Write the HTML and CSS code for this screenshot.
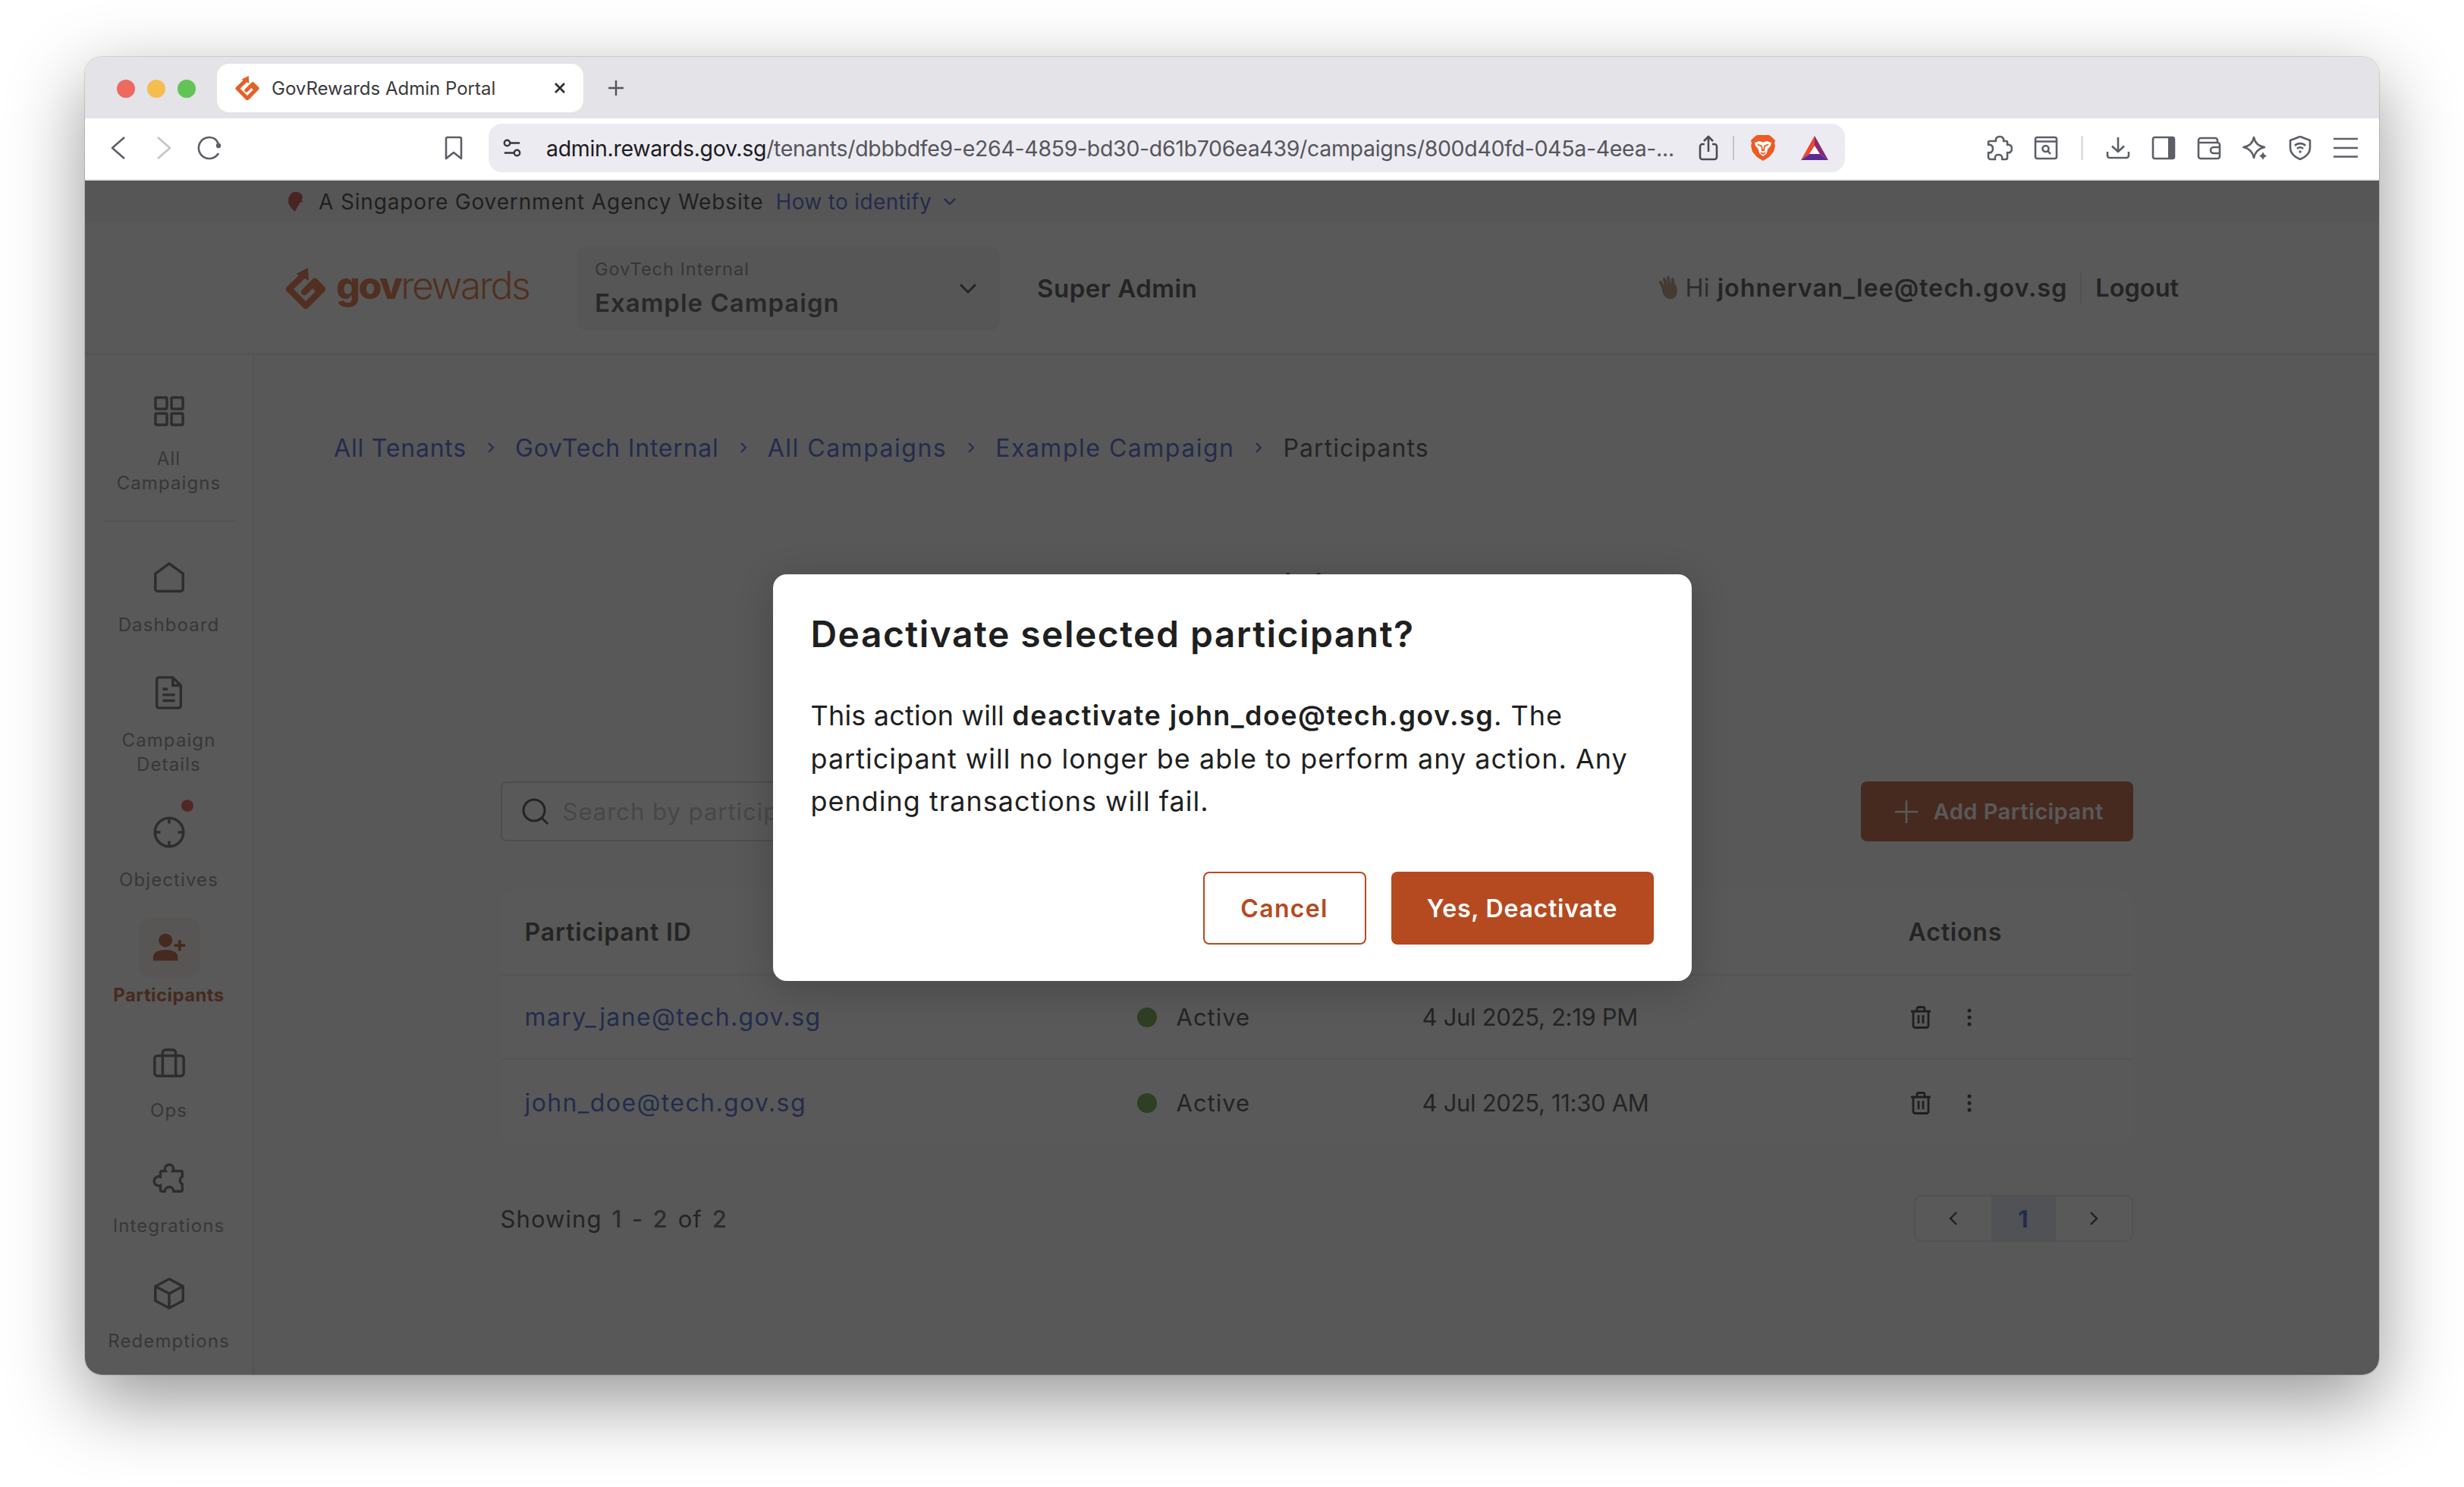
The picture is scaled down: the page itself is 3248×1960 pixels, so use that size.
FILE: index.html
```html
<!DOCTYPE html>
<html>
<head>
	<meta charset="UTF-8">
	<title>GovRewards Admin Portal</title>
	<link rel="stylesheet" href="styles.css">
</head>
<body>
<svg class="defs" width="0" height="0">
	<symbol id="gov" viewBox="0 0 54 54">
		<path d="M24 10 L5 28 L27 50 L49 28 L39 18 L25 32" fill="none" stroke="currentColor" stroke-width="8.500" stroke-linejoin="round" stroke-linecap="round"/>
		<path d="M14 8 L30 0 L31 17 Z M32 23 L44 21 L43 34 Z" fill="currentColor"/>
	</symbol>
	<symbol id="trash" viewBox="0 0 28 30">
		<path d="M1 7 H27 M9 7 V3.500 A2 2 0 0 1 11 1.500 H17 A2 2 0 0 1 19 3.500 V7 M4 7 V26 A2.500 2.500 0 0 0 6.500 28.500 H21.500 A2.500 2.500 0 0 0 24 26 V7 M11 12 V23 M17 12 V23" fill="none" stroke="currentColor" stroke-width="2.800"/>
	</symbol>
	<symbol id="kebab" viewBox="0 0 8 24">
		<circle cx="4" cy="3" r="2.500" fill="currentColor"/><circle cx="4" cy="12" r="2.500" fill="currentColor"/><circle cx="4" cy="21" r="2.500" fill="currentColor"/>
	</symbol>
</svg>

<div class="window">
	<div class="tabbar">
		<div class="lights"><i class="red"></i><i class="amber"></i><i class="green"></i></div>
		<div class="tab">
			<svg class="favicon"><use href="#gov"/></svg>
			<span class="tab-title">GovRewards Admin Portal</span>
			<svg class="tab-close" viewBox="0 0 16 16"><path d="M2 2 L14 14 M14 2 L2 14"/></svg>
		</div>
		<svg class="tab-new" viewBox="0 0 22 22"><path d="M11 1 V21 M1 11 H21"/></svg>
	</div>

	<div class="toolbar">
		<svg class="tool back" viewBox="0 0 32 32"><path d="M24 2 L8 16 L24 30"/></svg>
		<svg class="tool forward" viewBox="0 0 32 32"><path d="M8 2 L24 16 L8 30"/></svg>
		<svg class="tool reload" viewBox="0 0 32 32"><path d="M28 23 A14 14 0 1 1 22 3.400 C25 5 27 8 28 12"/><circle cx="28" cy="13" r="3.200" class="solid"/></svg>
		<svg class="tool bookmark" viewBox="0 0 32 32"><path d="M6 30 V4 A2 2 0 0 1 8 2 H24 A2 2 0 0 1 26 4 V30 L16 22 Z"/></svg>
		<div class="urlbar">
			<svg class="tool tune" viewBox="0 0 28 28"><circle cx="7" cy="7" r="4"/><path d="M11 7 H25 M3 21 H17"/><circle cx="21" cy="21" r="4"/></svg>
			<span class="url"><b>admin.rewards.gov.sg</b>/tenants/dbbbdfe9-e264-4859-bd30-d61b706ea439/campaigns/800d40fd-045a-4eea-...</span>
			<svg class="tool share" viewBox="0 0 26 34"><path d="M13 22 V2 M7 8 L13 2 L19 8 M8 12 H5 A3 3 0 0 0 2 15 V29 A3 3 0 0 0 5 32 H21 A3 3 0 0 0 24 29 V15 A3 3 0 0 0 21 12 H18"/></svg>
			<i class="url-sep"></i>
			<svg class="brave" viewBox="0 0 32 34"><path d="M8 0 H24 L28 3 L32 7 L31 11 L32 14 L30 22 L24 29 L16 34 L8 29 L2 22 L0 14 L1 11 L0 7 L4 3 Z" fill="#ee5a24"/><path d="M5 10 L11 8 L16 9.500 L21 8 L27 10 L26 14 L22 19 L21 24 L16 28 L11 24 L10 19 L6 14 Z" fill="#fff"/><path d="M9 12.500 L14 14.500 L15 20 H17 L18 14.500 L23 12.500 M13 23 L16 25 L19 23" fill="none" stroke="#ee5a24" stroke-width="1.800"/></svg>
			<svg class="triangle" viewBox="0 0 36 32"><path d="M18 13 L11 24 H25 Z" fill="#fff"/><path d="M18 0 L0 32 L11 24 L18 13 Z" fill="#e8482c"/><path d="M18 0 L36 32 L25 24 L18 13 Z" fill="#8a2a6e"/><path d="M0 32 H36 L25 24 H11 Z" fill="#5d2a94"/></svg>
		</div>
		<div class="tools-right">
			<svg class="tool wide" viewBox="0 0 34 34"><path d="M7 8 H12 C11 4 14 2 17 2 C20 2 23 4 22 8 H26 A1 1 0 0 1 27 9 V13 C30 12 33 14 33 18 C33 22 30 24 27 23 V30 A2 2 0 0 1 25 32 H20 C21 27 18 26 15.500 26 C13 26 10 27 11 32 H5 A3 3 0 0 1 2 29 V23 C5 24 8 22 8 18 C8 14 5 12 2 13 V10 A2 2 0 0 1 4 8 Z"/></svg>
			<svg class="tool" viewBox="0 0 32 32"><rect x="2" y="2" width="28" height="28" rx="2.500"/><path d="M2 7.500 H30"/><circle cx="15.500" cy="17" r="4"/><path d="M18.500 20 L22 24"/></svg>
			<i class="tool-sep"></i>
			<svg class="tool" viewBox="0 0 32 32"><path d="M16 2 V21 M8 13.500 L16 21 L24 13.500 M2 21 V26 A3 3 0 0 0 5 29 H27 A3 3 0 0 0 30 26 V21"/></svg>
			<svg class="tool" viewBox="0 0 32 32"><rect x="2" y="2" width="28" height="28" rx="2.500"/><path d="M22 2 H28 A2 2 0 0 1 30 4 V28 A2 2 0 0 1 28 30 H22 Z" class="solid"/></svg>
			<svg class="tool" viewBox="0 0 32 32"><path d="M27 9 V6 A3 3 0 0 0 24 3 H5 A3 3 0 0 0 2 6 V27 A3 3 0 0 0 5 30 H27 A3 3 0 0 0 30 27 V12 A3 3 0 0 0 27 9 H2"/><path d="M30 15 H22 A3 3 0 0 0 22 23 H30"/></svg>
			<svg class="tool" viewBox="0 0 32 32"><path d="M15 2 Q17 13 29 15 Q17 18 15 29 Q13 18 1.500 15 Q13 13 15 2 Z"/><path d="M27 21 Q28 25 32 26.500 Q28 28 27 32 Q26 28 22 26.500 Q26 25 27 21 Z" class="solid"/></svg>
			<svg class="tool" viewBox="0 0 32 32"><path d="M16 1 L29 6 V16 C29 23 23 28 16 31 C9 28 3 23 3 16 V6 Z"/><path d="M9 13 A10 10 0 0 1 23 13 M12 17 A5.500 5.500 0 0 1 20 17"/><circle cx="16" cy="21" r="1.700" class="solid"/></svg>
			<svg class="tool" viewBox="0 0 32 32"><path d="M0 4 H32 M0 16 H32 M0 27.500 H32"/></svg>
		</div>
	</div>

	<div class="page">
		<div class="masthead">
			<svg class="lion" viewBox="0 0 21 26"><path d="M9 0 C14 -1 19 2 20 6 L19 10 L20 13 L16 14 C16 17 12 20 10 26 C6 22 1 18 1 12 C1 6 4 1 9 0 Z"/></svg>
			<span class="gov-line">A Singapore Government Agency Website</span>
			<a class="identify">How to identify</a>
			<svg class="identify-arrow" viewBox="0 0 20 12"><path d="M2 2 L10 10 L18 2"/></svg>
		</div>

		<div class="header">
			<div class="logo">
				<svg class="logo-mark"><use href="#gov"/></svg>
				<span class="logo-text"><b>gov</b>rewards</span>
			</div>
			<div class="picker">
				<div>
					<div class="picker-label">GovTech Internal</div>
					<div class="picker-name">Example Campaign</div>
				</div>
				<svg class="picker-arrow" viewBox="0 0 24 14"><path d="M2 2 L12 12 L22 2"/></svg>
			</div>
			<div class="role">Super Admin</div>
			<div class="user">
				<svg class="wave" viewBox="0 0 28 32"><path d="M6 14 L3 8 M10 10 L8 4 M14 8 L13 2 M19 9 L19 4" stroke="#b08a6c" stroke-width="4" stroke-linecap="round"/><path d="M5 15 C4 24 10 31 18 30 C24 29 26 22 24 14 L21 8 L7 10 Z" fill="#b08a6c"/></svg>
				<span class="hi">Hi</span>
				<b class="user-name">johnervan_lee@tech.gov.sg</b>
				<i class="user-sep"></i>
				<b class="logout">Logout</b>
			</div>
		</div>

		<div class="main">
			<div class="sidebar">
				<div class="nav-item">
					<div class="nav-icon"><svg viewBox="0 0 24 24"><rect x="2.600" y="2.600" width="7.800" height="7.800" rx=".8"/><rect x="13.600" y="2.600" width="7.800" height="7.800" rx=".8"/><rect x="2.600" y="13.600" width="7.800" height="7.800" rx=".8"/><rect x="13.600" y="13.600" width="7.800" height="7.800" rx=".8"/></svg></div>
					<div class="nav-label">All<br>Campaigns</div>
				</div>
				<div class="nav-rule"></div>
				<div class="nav-item">
					<div class="nav-icon"><svg viewBox="0 0 24 24"><path d="M12 2.500 L21.500 9.500 V20 A1.500 1.500 0 0 1 20 21.500 H4 A1.500 1.500 0 0 1 2.500 20 V9.500 Z"/></svg></div>
					<div class="nav-label">Dashboard</div>
				</div>
				<div class="nav-item">
					<div class="nav-icon"><svg viewBox="0 0 24 24"><path d="M5 1.500 H14.500 L20 7 V21 A1.500 1.500 0 0 1 18.500 22.500 H5 A1.500 1.500 0 0 1 3.500 21 V3 A1.500 1.500 0 0 1 5 1.500 Z M14.500 1.500 V7 H20 M7.500 9.500 H11 M7.500 13.500 H16 M7.500 17.500 H16"/></svg></div>
					<div class="nav-label">Campaign<br>Details</div>
				</div>
				<div class="nav-item">
					<div class="nav-icon">
						<svg viewBox="0 0 24 24"><circle cx="12" cy="12" r="9.800"/><path d="M12 2 V6 M12 18 V22 M2 12 H6 M18 12 H22"/></svg>
						<i class="nav-dot"></i>
					</div>
					<div class="nav-label">Objectives</div>
				</div>
				<div class="nav-item active">
					<div class="nav-icon"><svg viewBox="0 0 24 24"><circle cx="9.500" cy="7" r="4.700" class="solid"/><path d="M1 21 V18.500 C1 15 5 13.500 9.500 13.500 C14 13.500 18 15 18 18.500 V21 Z" class="solid"/><path d="M15.500 10.500 H23 M19.200 6.800 V14.200" class="plus"/></svg></div>
					<div class="nav-label">Participants</div>
				</div>
				<div class="nav-item">
					<div class="nav-icon"><svg viewBox="0 0 24 24"><rect x="2" y="7" width="20" height="14" rx="2"/><path d="M7.500 21 V5 A2 2 0 0 1 9.500 3 H14.500 A2 2 0 0 1 16.500 5 V21"/></svg></div>
					<div class="nav-label">Ops</div>
				</div>
				<div class="nav-item">
					<div class="nav-icon"><svg viewBox="0 0 24 24"><path d="M7 7 H9.500 A2.900 2.900 0 1 1 14.500 7 H20 A1 1 0 0 1 21 8 V11 A2.800 2.800 0 0 0 21 16 V20 A1 1 0 0 1 20 21 H15 A3 3 0 0 0 9 21 H7 A1 1 0 0 1 6 20 V17 A3.200 3.200 0 1 1 6 11 V8 A1 1 0 0 1 7 7 Z"/></svg></div>
					<div class="nav-label">Integrations</div>
				</div>
				<div class="nav-item">
					<div class="nav-icon"><svg viewBox="0 0 24 24"><path d="M12 2 L21.500 7 V17 L12 22 L2.500 17 V7 Z M2.500 7 L12 12 L21.500 7 M12 12 V22"/></svg></div>
					<div class="nav-label">Redemptions</div>
				</div>
			</div>

			<div class="content">
				<div class="crumbs">
					<a>All Tenants</a><svg class="crumb-arrow" viewBox="0 0 10 16"><path d="M2 2 L8 8 L2 14"/></svg>
					<a>GovTech Internal</a><svg class="crumb-arrow" viewBox="0 0 10 16"><path d="M2 2 L8 8 L2 14"/></svg>
					<a class="crumb-wide">All Campaigns</a><svg class="crumb-arrow" viewBox="0 0 10 16"><path d="M2 2 L8 8 L2 14"/></svg>
					<a class="crumb-wide">Example Campaign</a><svg class="crumb-arrow" viewBox="0 0 10 16"><path d="M2 2 L8 8 L2 14"/></svg>
					<span>Participants</span>
				</div>

				<div class="panel">
					<h1 class="panel-title">Participants</h1>
					<div class="panel-tools">
						<div class="search">
							<svg class="search-icon" viewBox="0 0 36 36"><circle cx="16" cy="16" r="14"/><path d="M26 26 L34 34"/></svg>
							<span class="placeholder">Search by participant ID</span>
						</div>
						<div class="add-btn">
							<svg class="add-plus" viewBox="0 0 32 32"><path d="M16 1 V31 M1 16 H31"/></svg>
							<span>Add Participant</span>
						</div>
					</div>

					<div class="table">
						<div class="tr th">
							<div>Participant ID</div>
							<div></div>
							<div></div>
							<div>Actions</div>
						</div>
						<div class="tr">
							<div><a class="pid">mary_jane@tech.gov.sg</a></div>
							<div class="status"><i></i>Active</div>
							<div class="date">4 Jul 2025, 2:19 PM</div>
							<div class="acts"><svg class="trash"><use href="#trash"/></svg><svg class="kebab"><use href="#kebab"/></svg></div>
						</div>
						<div class="tr last">
							<div><a class="pid">john_doe@tech.gov.sg</a></div>
							<div class="status"><i></i>Active</div>
							<div class="date">4 Jul 2025, 11:30 AM</div>
							<div class="acts"><svg class="trash"><use href="#trash"/></svg><svg class="kebab"><use href="#kebab"/></svg></div>
						</div>
					</div>

					<div class="panel-foot">
						<div class="showing">Showing <b>1 - 2</b> of <b>2</b></div>
						<div class="pager">
							<div class="pager-cell"><svg viewBox="0 0 14 20"><path d="M11 2 L3 10 L11 18"/></svg></div>
							<div class="pager-cell current">1</div>
							<div class="pager-cell"><svg viewBox="0 0 14 20"><path d="M3 2 L11 10 L3 18"/></svg></div>
						</div>
					</div>
				</div>
			</div>
		</div>

		<div class="overlay">
			<div class="modal">
				<div class="modal-title">Deactivate selected participant?</div>
				<p class="modal-text"><span class="modal-lead">This action will </span><b>deactivate john_doe@tech.gov.sg</b>. The participant will no longer be able to perform any action. Any pending transactions will fail.</p>
				<div class="modal-btns">
					<div class="btn btn-line">Cancel</div>
					<div class="btn btn-solid">Yes, Deactivate</div>
				</div>
			</div>
		</div>
	</div>
</div>
</body>
</html>
```

FILE: styles.css
```css
*{margin: 0;padding: 0;box-sizing: border-box;}
html,body{width: 3248px;height: 1960px;overflow: hidden;}
body{background: #fff;padding: 75px 112px 148px;font-family: "Inter","Open Sans",sans-serif;color: #1f1f1f;}
a{color: #3450d0;}
i{font-style: normal;display: block;}
svg{display: block;flex: none;}
.defs{position: absolute;}

.window{height: 100%;border-radius: 22px;overflow: hidden;display: flex;flex-direction: column;box-shadow: 0 0 0 1px rgba(0,0,0,.12),0 34px 100px rgba(0,0,0,.42);}

/* browser chrome */
.tabbar{height: 81px;background: #e3e3e8;display: flex;align-items: flex-start;padding: 9px 0 0 42px;flex: none;}
.lights{display: flex;gap: 16px;margin: 21px 28px 0 0;}
.lights i{width: 24px;height: 24px;border-radius: 50%;}
.lights .red{background: #ee6a5f;}
.lights .amber{background: #f5bd4f;}
.lights .green{background: #61c454;}
.tab{width: 483px;height: 64px;background: #fff;border-radius: 16px;display: flex;align-items: center;padding: 0 23px 0 24px;}
.favicon{width: 32px;height: 32px;color: #e0622a;margin-right: 16px;}
.tab-title{flex: 1;font-size: 24px;color: #3a3a3c;white-space: nowrap;}
.tab-close{width: 16px;height: 16px;fill: none;stroke: #2c2c2e;stroke-width: 2.6;}
.tab-new{width: 22px;height: 22px;margin: 21px 0 0 32px;fill: none;stroke: #55555a;stroke-width: 2.4;}

.toolbar{height: 82px;background: #fff;border-bottom: 2px solid #e3e3e8;display: flex;align-items: center;padding: 0 28px 2px 28px;flex: none;}
.tool{width: 32px;height: 32px;fill: none;stroke: #5c5f66;stroke-width: 2.6;stroke-linejoin: round;}
.tool.wide{width: 34px;height: 34px;}
.tool .solid{fill: #5c5f66;stroke: none;}
.forward{margin-left: 28px;stroke: #c4c5c9;}
.reload{margin-left: 28px;}
.bookmark{margin-left: 290px;}
.urlbar{width: 1788px;height: 64px;background: #ecebf1;border-radius: 18px;margin-left: 30px;display: flex;align-items: center;padding: 0 0 0 18px;flex: none;}
.tune{width: 26px;height: 26px;stroke: #37373b;}
.url{font-size: 28.500px;color: #55555c;margin-left: 32px;white-space: nowrap;width: 1502px;flex: none;letter-spacing: -.32px;}
.url b{font-weight: 400;color: #1c1c1e;}
.share{width: 26px;height: 34px;stroke: #4b4b50;margin-left: 17px;}
.url-sep{width: 2px;height: 32px;background: #c3c3c8;margin-left: 19px;}
.brave{width: 32px;height: 34px;margin-left: 22px;}
.triangle{width: 36px;height: 32px;margin-left: 34px;}
.tools-right{display: flex;align-items: center;margin-left: auto;gap: 28px;}
.tool-sep{width: 3px;height: 32px;background: #dedee3;margin: 0 2px;}

/* page under the dialog */
.page{flex: 1;min-height: 0;position: relative;background: #fff;display: flex;flex-direction: column;}
.masthead{height: 55px;background: #f4f4f4;display: flex;align-items: center;padding-left: 267px;font-size: 28px;flex: none;}
.lion{width: 21px;height: 26px;fill: #c4352c;margin-right: 20px;}
.gov-line{letter-spacing: .85px;}
.identify{margin-left: 16px;color: #3450d0;letter-spacing: .35px;}
.identify-arrow{width: 18px;height: 11px;margin-left: 15px;fill: none;stroke: #3450d0;stroke-width: 2.6;}

.header{height: 175px;border-bottom: 2px solid #e8e8e8;display: flex;align-items: center;padding-left: 264px;flex: none;}
.logo{display: flex;align-items: center;width: 384px;}
.logo-mark{width: 54px;height: 54px;color: #e0622a;margin-right: 13px;}
.logo-text{font-size: 50px;color: #e0622a;letter-spacing: -2.5px;font-weight: 300;line-height: 1;padding-bottom: 8px;}
.logo-text b{font-weight: 800;}
.picker{width: 558px;height: 112px;background: #f2f2f2;border-radius: 14px;display: flex;align-items: center;justify-content: space-between;padding: 0 30px 0 24px;}
.picker-label{font-size: 23.500px;color: #7a7a7a;margin-bottom: 8px;letter-spacing: 1px;}
.picker-name{font-size: 33px;font-weight: 600;color: #444;letter-spacing: 1px;padding-top: 2px;}
.picker-arrow{width: 24px;height: 14px;fill: none;stroke: #333;stroke-width: 3;}
.role{font-size: 33px;font-weight: 600;margin-left: 49px;color: #333;letter-spacing: .5px;}
.user{margin-left: auto;margin-right: 264px;display: flex;align-items: center;font-size: 32.500px;}
.wave{width: 28px;height: 32px;margin-right: 8px;}
.hi{color: #555;margin-right: 10px;}
.user-name{font-weight: 600;color: #333;letter-spacing: .9px;}
.user-sep{width: 2px;height: 40px;background: #e0e0e0;margin: 0 18px 0 17px;}
.logout{font-weight: 600;color: #333;}

.main{flex: 1;min-height: 0;display: flex;}
.sidebar{width: 223px;border-right: 2px solid #e8e8e8;padding-top: 34px;flex: none;overflow: hidden;}
.nav-item{margin-bottom: 33px;text-align: center;}
.nav-icon{width: 80px;height: 80px;margin: 0 auto 7px;border-radius: 16px;display: flex;align-items: center;justify-content: center;position: relative;}
.nav-icon svg{width: 46px;height: 46px;fill: none;stroke: #555;stroke-width: 1.800;}
.nav-label{font-size: 24px;line-height: 32px;color: #7c7c7c;letter-spacing: 1.1px;}
.nav-dot{position: absolute;width: 16px;height: 16px;border-radius: 50%;background: #e0403a;left: 56px;top: -3px;}
.nav-rule{width: 174px;height: 2px;background: #e4e4e4;margin: 0 auto 33px;}
.nav-item.active .nav-icon{background: #fbf1ec;}
.nav-item.active svg{stroke: none;}
.nav-item.active .solid{fill: #b54a20;}
.nav-item.active .plus{fill: none;stroke: #b54a20;stroke-width: 2;}
.nav-item.active .nav-label{color: #b54a20;font-weight: 700;letter-spacing: .4px;}

.content{flex: 1;min-width: 0;background: #f9f9f9;padding-top: 102px;}
.crumbs{height: 40px;display: flex;align-items: center;padding-left: 105px;font-size: 32px;letter-spacing: .8px;}
.crumbs a{color: #3450d0;}
.crumbs .crumb-wide{letter-spacing: 1.5px;}
.crumbs span{color: #333;letter-spacing: 1.1px;}
.crumb-arrow{width: 10px;height: 16px;margin: 0 27px;fill: none;stroke: #3450d0;stroke-width: 2;}
.panel{width: 2152px;margin: 0 auto;}
.panel-title{font-size: 48px;line-height: 60px;font-weight: 600;text-align: center;margin-top: 135px;}
.panel-tools{margin-top: 225px;height: 79px;display: flex;justify-content: space-between;}
.search{width: 1000px;background: #fff;border: 2px solid #d0d0d0;border-radius: 8px;display: flex;align-items: center;padding-left: 26px;}
.search-icon{width: 36px;height: 36px;fill: none;stroke: #333;stroke-width: 3;}
.placeholder{font-size: 31px;color: #b8b8b8;margin-left: 18px;letter-spacing: 1px;}
.add-btn{width: 359px;background: #b54a20;border-radius: 8px;display: flex;align-items: center;color: #fff;font-size: 29px;font-weight: 600;padding-left: 44px;letter-spacing: .5px;}
.add-plus{width: 32px;height: 32px;margin-right: 20px;fill: none;stroke: #fff;stroke-width: 2.600;}

.table{margin-top: 64px;background: #fff;border-radius: 20px;font-size: 31px;}
.tr{display: grid;grid-template-columns: 807px 376px 641px 1fr;align-items: center;padding-left: 32px;height: 111px;border-bottom: 2px solid #eaeaea;color: #333;}
.tr.th{height: 113px;font-weight: 600;font-size: 32px;letter-spacing: .85px;}
.tr.last{height: 113px;border-bottom: 0;}
.pid{color: #3450d0;font-size: 32px;letter-spacing: 1.4px;}
.status{display: flex;align-items: center;letter-spacing: 1px;}
.status i{width: 26px;height: 26px;border-radius: 50%;background: #5a9a34;margin: 0 26px 0 0;}
.date{letter-spacing: -.3px;}
.acts{display: flex;align-items: center;padding-left: 2px;}
.trash{width: 28px;height: 30px;color: #222;}
.kebab{width: 8px;height: 24px;color: #222;margin-left: 46px;}

.panel-foot{margin-top: 65px;display: flex;justify-content: space-between;align-items: center;}
.showing{font-size: 31px;letter-spacing: 1.1px;word-spacing: 3px;color: #333;}
.showing b{font-weight: 500;color: #555;}
.pager{display: flex;height: 62px;border: 2px solid #e4e4e4;border-radius: 10px;overflow: hidden;background: #fff;}
.pager-cell{width: 100px;display: flex;align-items: center;justify-content: center;}
.pager-cell svg{width: 14px;height: 20px;fill: none;stroke: #222;stroke-width: 2.400;}
.pager-cell.current{width: 85px;background: #dbe3f2;color: #3450d0;font-size: 31px;font-weight: 700;}

/* dialog */
.overlay{position: absolute;left: 0;top: 0;right: 0;bottom: 0;background: rgba(31,31,31,.74);display: flex;align-items: center;justify-content: center;}
.modal{width: 1211px;height: 536px;background: #fff;border-radius: 18px;padding: 50px 50px 48px;box-shadow: 0 10px 50px rgba(0,0,0,.2);display: flex;flex-direction: column;}
.modal-title{font-size: 48px;font-weight: 600;line-height: 58px;color: #1f1f1f;letter-spacing: 1.45px;}
.modal-text{font-size: 36px;line-height: 56.500px;margin-top: 50px;color: #1f1f1f;width: 1100px;letter-spacing: 1px;}
.modal-lead{letter-spacing: .2px;}
.modal-text b{font-weight: 600;letter-spacing: 1.4px;}
.modal-btns{margin-top: auto;display: flex;justify-content: flex-end;gap: 33px;}
.btn{height: 96px;border-radius: 8px;display: flex;align-items: center;justify-content: center;font-size: 32px;font-weight: 600;}
.btn-line{width: 215px;border: 2px solid #b54a20;color: #b54a20;letter-spacing: 1.3px;}
.btn-solid{width: 346px;background: #b54a20;color: #fff;letter-spacing: .8px;}
```
